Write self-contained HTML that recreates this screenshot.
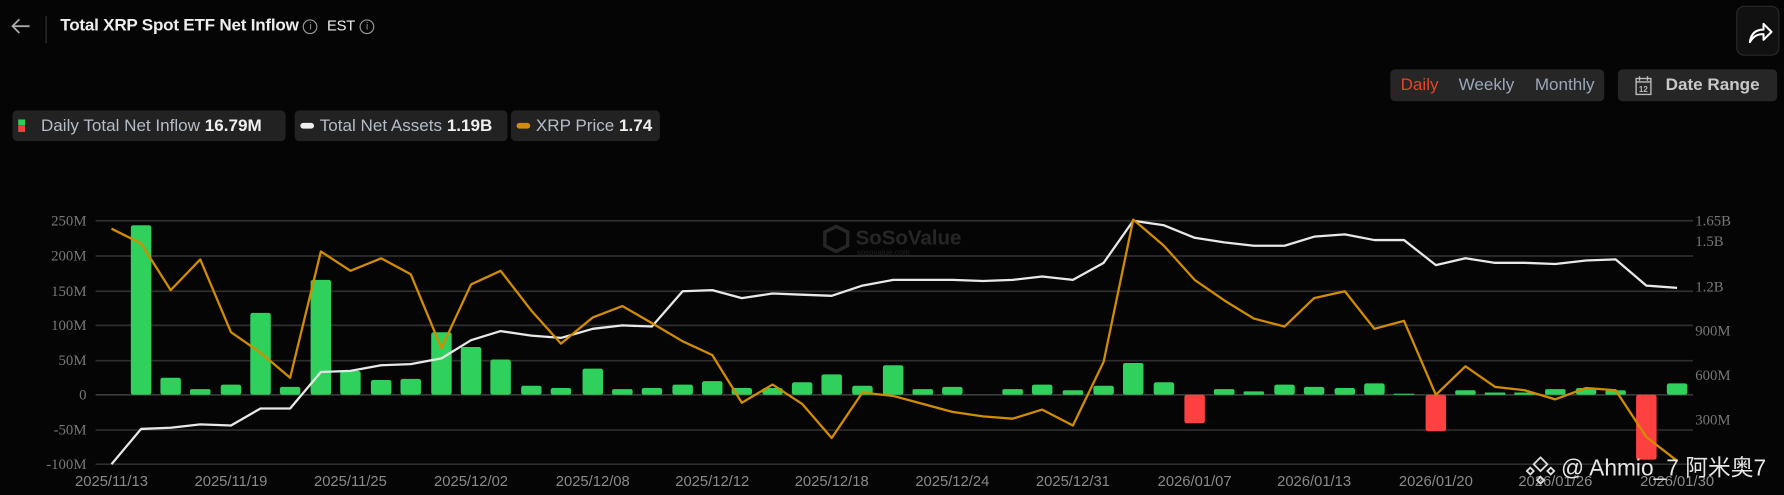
<!DOCTYPE html>
<html><head><meta charset="utf-8"><style>
html,body{margin:0;width:1784px;height:495px;background:#050505;overflow:hidden}
#wrap{position:absolute;left:0;top:0;width:1568px;height:435px;transform:scale(1.13776);transform-origin:0 0;font-family:"Liberation Sans",sans-serif;color:#ddd}
.abs{position:absolute}
.title{left:53px;top:14px;font-size:15px;font-weight:bold;color:#eee;letter-spacing:-0.2px}
.info{display:inline-block;width:11px;height:11px;border:1.3px solid #999;border-radius:50%;font-size:9px;line-height:11px;text-align:center;color:#999;vertical-align:1px;font-weight:normal}
.seg{left:1222px;top:61px;width:188px;height:28px;background:#262626;border-radius:4px;font-size:15px;color:#9aa6b8}
.seg span{position:absolute;top:5px}
.dr{left:1422px;top:61px;width:140px;height:28px;background:#262626;border-radius:4px;font-size:15px;font-weight:bold;color:#c8c8c8}
.chip{top:97px;height:27px;background:#222;border-radius:4px;font-size:15px;color:#b4bcc8;line-height:27px;white-space:nowrap}
.chip b{color:#eee}
.share{left:1526px;top:5px;width:36px;height:42px;background:#111;border:1px solid #2a2a2a;border-radius:7px}
</style></head><body><div id="wrap">
<svg class="abs" style="left:8px;top:14px" width="20" height="18"><path d="M18 9H3M9 3L3 9l6 6" stroke="#aaa" stroke-width="1.6" fill="none"/></svg>
<div class="abs" style="left:40px;top:14px;width:1px;height:24px;background:#333"></div>
<div class="abs title">Total XRP Spot ETF Net Inflow <span class="info">i</span>&nbsp;&nbsp;<span style="font-size:13px;font-weight:normal;color:#eee">EST</span> <span class="info">i</span></div>
<div class="abs share"><svg width="36" height="42"><path d="M11 31c1-7 5-11 12-11v-5l7 7-7 7v-5c-6 0-9 2-12 7z" fill="none" stroke="#fff" stroke-width="1.8" stroke-linejoin="round"/></svg></div>
<div class="abs seg"><span style="left:9px;color:#e8412a">Daily</span><span style="left:60px">Weekly</span><span style="left:127px">Monthly</span></div>
<div class="abs dr"><svg class="abs" style="left:14px;top:5px" width="18" height="18"><rect x="2" y="3" width="13" height="14" fill="none" stroke="#bbb" stroke-width="1.2"/><path d="M2 6h13M5 1v4M12 1v4" stroke="#bbb" stroke-width="1.2"/><text x="4.5" y="15" font-size="7" fill="#bbb" font-family="Liberation Sans">12</text></svg><span class="abs" style="left:42px;top:5px">Date Range</span></div>
<div class="abs chip" style="left:11px;width:240px"><span class="abs" style="left:5px;top:8px;width:6px;height:5px;background:#2ecc5c"></span><span class="abs" style="left:5px;top:13px;width:6px;height:6px;background:#f04040"></span><span style="margin-left:25px">Daily Total Net Inflow <b>16.79M</b></span></div>
<div class="abs chip" style="left:259px;width:187px"><span class="abs" style="left:5px;top:11px;width:12px;height:5px;background:#eee;border-radius:3px"></span><span style="margin-left:22px">Total Net Assets <b>1.19B</b></span></div>
<div class="abs chip" style="left:449px;width:131px"><span class="abs" style="left:5px;top:11px;width:12px;height:5px;background:#d18c00;border-radius:3px"></span><span style="margin-left:22px">XRP Price <b>1.74</b></span></div>

<svg class="abs" style="left:0;top:0" width="1568" height="435">
<g stroke="#2e2e2e" stroke-width="1.5">
<path d="M84 194H1488M84 225H1488M84 256H1488M84 286H1488M84 317H1488M84 378H1488M84 408H1488"/>
<path d="M84 347H1488" stroke="#3a3a3a"/>
</g>
<g font-family="Liberation Serif,serif" font-size="13" fill="#777" text-anchor="end">
<text x="76" y="198">250M</text><text x="76" y="229">200M</text><text x="76" y="260">150M</text><text x="76" y="290">100M</text><text x="76" y="321">50M</text><text x="76" y="351">0</text><text x="76" y="382">-50M</text><text x="76" y="412">-100M</text>
</g>
<g font-family="Liberation Serif,serif" font-size="13" fill="#777">
<text x="1490" y="198">1.65B</text><text x="1490" y="216">1.5B</text><text x="1490" y="256">1.2B</text><text x="1490" y="295">900M</text><text x="1490" y="334">600M</text><text x="1490" y="373">300M</text>
</g>
<g font-family="Liberation Sans,sans-serif" font-size="13" fill="#8a8a8a" text-anchor="middle">
<text x="98" y="427">2025/11/13</text><text x="203" y="427">2025/11/19</text><text x="308" y="427">2025/11/25</text><text x="414" y="427">2025/12/02</text><text x="521" y="427">2025/12/08</text><text x="626" y="427">2025/12/12</text><text x="731" y="427">2025/12/18</text><text x="837" y="427">2025/12/24</text><text x="943" y="427">2025/12/31</text><text x="1050" y="427">2026/01/07</text><text x="1155" y="427">2026/01/13</text><text x="1262" y="427">2026/01/20</text><text x="1367" y="427">2026/01/26</text><text x="1474" y="427">2026/01/30</text>
</g>
<g opacity="0.35">
<path d="M735 199l10 5v12l-10 5-10-5v-12z" fill="none" stroke="#666" stroke-width="3"/>
<text x="752" y="215" font-family="Liberation Sans,sans-serif" font-size="18" font-weight="bold" fill="#666">SoSoValue</text>
<text x="753" y="224" font-family="Liberation Sans,sans-serif" font-size="7" fill="#555">sosovalue.com</text>
</g>
<g fill="#2fd15c">
<rect x="115" y="198" width="18" height="149" rx="2"/>
<rect x="141" y="332" width="18" height="15" rx="2"/>
<rect x="167" y="342" width="18" height="5" rx="1.5"/>
<rect x="194" y="338" width="18" height="9" rx="2"/>
<rect x="220" y="275" width="18" height="72" rx="2"/>
<rect x="246" y="340" width="18" height="7" rx="2"/>
<rect x="273" y="246" width="18" height="101" rx="2"/>
<rect x="299" y="326" width="18" height="21" rx="2"/>
<rect x="326" y="334" width="18" height="13" rx="2"/>
<rect x="352" y="333" width="18" height="14" rx="2"/>
<rect x="379" y="292" width="18" height="55" rx="2"/>
<rect x="405" y="305" width="18" height="42" rx="2"/>
<rect x="431" y="316" width="18" height="31" rx="2"/>
<rect x="458" y="339" width="18" height="8" rx="2"/>
<rect x="484" y="341" width="18" height="6" rx="2"/>
<rect x="512" y="324" width="18" height="23" rx="2"/>
<rect x="538" y="342" width="18" height="5" rx="1.5"/>
<rect x="564" y="341" width="18" height="6" rx="2"/>
<rect x="591" y="338" width="18" height="9" rx="2"/>
<rect x="617" y="335" width="18" height="12" rx="2"/>
<rect x="643" y="341" width="18" height="6" rx="2"/>
<rect x="670" y="341" width="18" height="6" rx="2"/>
<rect x="696" y="336" width="18" height="11" rx="2"/>
<rect x="722" y="329" width="18" height="18" rx="2"/>
<rect x="749" y="339" width="18" height="8" rx="2"/>
<rect x="776" y="321" width="18" height="26" rx="2"/>
<rect x="802" y="342" width="18" height="5" rx="1.5"/>
<rect x="828" y="340" width="18" height="7" rx="2"/>
<rect x="881" y="342" width="18" height="5" rx="1.5"/>
<rect x="907" y="338" width="18" height="9" rx="2"/>
<rect x="934" y="343" width="18" height="4" rx="1.5"/>
<rect x="961" y="339" width="18" height="8" rx="2"/>
<rect x="987" y="319" width="18" height="28" rx="2"/>
<rect x="1014" y="336" width="18" height="11" rx="2"/>
<rect x="1067" y="342" width="18" height="5" rx="1.5"/>
<rect x="1093" y="344" width="18" height="3" rx="1"/>
<rect x="1120" y="338" width="18" height="9" rx="2"/>
<rect x="1146" y="340" width="18" height="7" rx="2"/>
<rect x="1173" y="341" width="18" height="6" rx="2"/>
<rect x="1199" y="337" width="18" height="10" rx="2"/>
<rect x="1225" y="346" width="18" height="1"/>
<rect x="1279" y="343" width="18" height="4" rx="1.5"/>
<rect x="1305" y="345" width="18" height="2"/>
<rect x="1331" y="345" width="18" height="2"/>
<rect x="1358" y="342" width="18" height="5" rx="1.5"/>
<rect x="1385" y="341" width="18" height="6" rx="2"/>
<rect x="1411" y="343" width="18" height="4" rx="1.5"/>
<rect x="1465" y="337" width="18" height="10" rx="2"/>
</g>
<g fill="#ff4040">
<rect x="1041" y="347" width="18" height="25" rx="2"/>
<rect x="1253" y="347" width="18" height="32" rx="2"/>
<rect x="1438" y="347" width="18" height="57" rx="2"/>
</g>
<polyline fill="none" stroke="#e8e8e8" stroke-width="2" stroke-linejoin="round" points="98,408 124,377 150,376 176,373 203,374 229,359 255,359 282,327 308,326 335,321 361,320 388,315 414,299 440,291 467,295 493,297 521,289 547,286 573,287 600,256 626,255 652,262 679,258 705,259 731,260 758,251 785,246 811,246 837,246 864,247 890,246 916,243 943,246 970,231 996,194 1023,198 1050,209 1076,213 1102,216 1129,216 1155,208 1182,206 1208,211 1234,211 1262,233 1288,227 1314,231 1340,231 1367,232 1394,229 1420,228 1447,251 1474,253"/>
<polyline fill="none" stroke="#d18c00" stroke-width="2" stroke-linejoin="round" points="98,201 124,214 150,255 176,228 203,292 229,310 255,332 282,221 308,238 335,227 361,241 388,306 414,250 440,238 467,273 493,302 521,279 547,269 573,284 600,300 626,312 652,354 679,338 705,355 731,385 758,345 785,348 811,355 837,362 864,366 890,368 916,360 943,374 970,318 996,193 1023,216 1050,246 1076,264 1102,280 1129,287 1155,262 1182,256 1208,289 1234,282 1262,347 1288,322 1314,340 1340,343 1367,351 1394,341 1420,343 1447,384 1474,405"/>
<g fill="none" stroke="#ddd" stroke-width="1.6"><path d="M1354 402l6 6-6 6-6-6zM1345 411l3 3-3 3-3-3zM1363 411l3 3-3 3-3-3zM1354 419l3 3-3 3-3-3z"/></g>
<text x="1372" y="418" font-family="Liberation Sans,'Noto Sans CJK SC',sans-serif" font-size="20" fill="#e6e6e6">@ Ahmio_7 阿米奥7</text>
</svg>
</div></body></html>
